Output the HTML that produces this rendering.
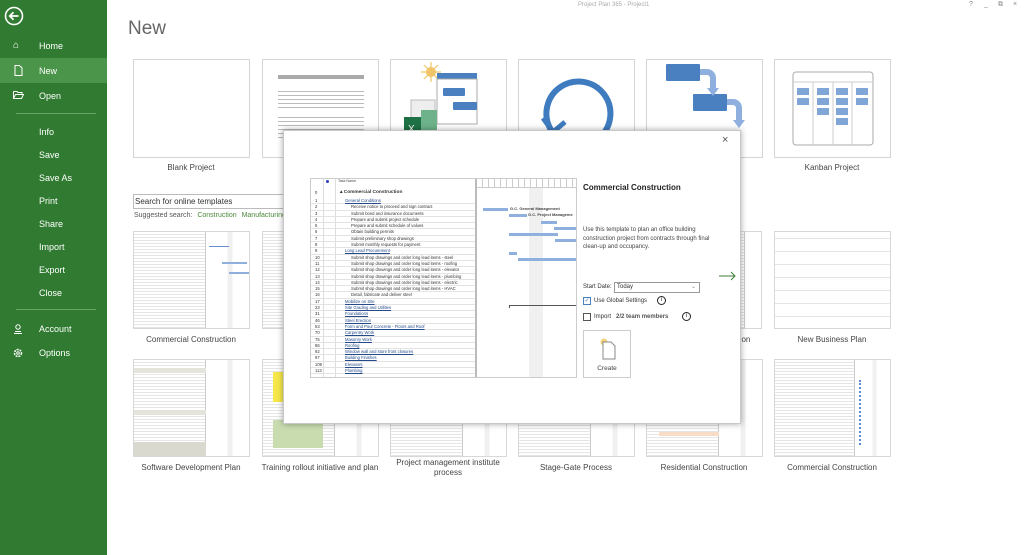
<!DOCTYPE html>
<html><head><meta charset="utf-8">
<style>
*{margin:0;padding:0;box-sizing:border-box}
body{width:1024px;height:555px;overflow:hidden;background:#fff;font-family:"Liberation Sans",sans-serif;position:relative;color:#444}
.side{position:absolute;left:0;top:0;width:107px;height:555px;background:#307b31}
.side .it{position:absolute;left:39px;color:#fff;font-size:9px}
.side .ic{position:absolute;left:13px;color:#fff;font-size:10px}
.sel{position:absolute;left:0;top:58px;width:107px;height:25px;background:#4b954a}
.hr{position:absolute;left:16px;width:80px;height:1px;background:#6aa368}
.abs{position:absolute}
.tile{position:absolute;top:59px;width:117px;height:99px;border:1px solid #d5d5d5;background:#fff}
.lab{position:absolute;font-size:8px;color:#444;text-align:center;width:140px}
.th{position:absolute;width:117px;height:98px;border:1px solid #d8d8d8;background:#fff;overflow:hidden}
.th .l{position:absolute;left:0;top:0;width:72px;height:100%;background:repeating-linear-gradient(#fff 0 2px,#e6e6e6 2px 3px);border-right:1px solid #ccc}
.th .r{position:absolute;left:72px;top:0;right:0;height:100%;background:linear-gradient(90deg,#fff 0 50%,#f0f0f0 50% 62%,#fff 62%)}
.dlg{position:absolute;left:283px;top:130px;width:458px;height:294px;background:#fff;border:1px solid #c8c8c8;box-shadow:0 0 6px rgba(0,0,0,.35)}
.row{position:absolute;left:0;width:266px;height:6.3px;font-size:4.2px;color:#333;white-space:nowrap;border-bottom:1px solid #e3e3e3}
.row .n{position:absolute;left:4px;width:20px}
.row .x{position:absolute;left:40px}
.u{color:#244a8a;text-decoration:underline}
.bar{position:absolute;height:3px;background:#8fb0df}
</style></head><body>
<div class="side">
<svg class="abs" style="left:4px;top:6px" width="20" height="20" viewBox="0 0 20 20"><circle cx="10" cy="10" r="8.5" fill="none" stroke="#fff" stroke-width="1.6"/><path d="M14.5 10H6M9.5 6.3L5.8 10l3.7 3.7" fill="none" stroke="#fff" stroke-width="1.8"/></svg>
<div class="sel"></div>
<div class="ic" style="top:40px">⌂</div><div class="it" style="top:41px">Home</div>
<svg class="abs" style="left:14px;top:65px" width="9" height="11"><path d="M1 .5h4.5l2.5 2.5v7.5H1z" fill="none" stroke="#fff"/></svg><div class="it" style="top:66px">New</div>
<svg class="abs" style="left:13px;top:90px" width="11" height="10"><path d="M.5 1.5h3.5l1 1h4v2M.5 1.5v7h8l2-4h-8l-2 4" fill="none" stroke="#fff"/></svg><div class="it" style="top:91px">Open</div>
<div class="hr" style="top:113px"></div>
<div class="it" style="top:127px">Info</div>
<div class="it" style="top:150px">Save</div>
<div class="it" style="top:173px">Save As</div>
<div class="it" style="top:196px">Print</div>
<div class="it" style="top:219px">Share</div>
<div class="it" style="top:242px">Import</div>
<div class="it" style="top:265px">Export</div>
<div class="it" style="top:288px">Close</div>
<div class="hr" style="top:309px"></div>
<svg class="abs" style="left:13px;top:324px" width="10" height="10"><circle cx="5" cy="3" r="2.2" fill="none" stroke="#fff"/><path d="M1 9.5h8M2 7.5h6" stroke="#fff"/></svg><div class="it" style="top:324px">Account</div>
<svg class="abs" style="left:13px;top:348px" width="10" height="10"><circle cx="5" cy="5" r="3.5" fill="none" stroke="#fff" stroke-width="1.5" stroke-dasharray="2 1"/><circle cx="5" cy="5" r="1.3" fill="none" stroke="#fff"/></svg><div class="it" style="top:348px">Options</div>
</div>

<div class="abs" style="left:578px;top:2px;font-size:6px;color:#aaa;white-space:nowrap">Project Plan 365 - Project1</div>
<div class="abs" style="left:968px;top:1px;font-size:7px;color:#888;white-space:nowrap;width:56px"><span style="position:absolute;left:1px">?</span><span style="position:absolute;left:16px">_</span><span style="position:absolute;left:30px">⧉</span><span style="position:absolute;left:45px">×</span></div>

<div class="abs" style="left:128px;top:18px;font-size:19px;color:#666">New</div>

<div class="tile" style="left:133px"></div>
<div class="tile" style="left:262px"><div class="abs" style="left:15px;top:15px;width:86px;height:4px;background:#aaa"></div>
<div class="abs" style="left:15px;top:28px;width:86px;height:22px;background:repeating-linear-gradient(#fff 0 3px,#bbb 3px 4px)"></div>
<div class="abs" style="left:15px;top:54px;width:86px;height:26px;background:repeating-linear-gradient(#fff 0 3px,#bbb 3px 4px)"></div></div>
<div class="tile" style="left:390px"><svg width="117" height="99"><circle cx="40" cy="12" r="5" fill="#f2c46a"/><path d="M40 2v20M30 12h20M33 5l14 14M47 5l-14 14" stroke="#f2c46a" stroke-width="1.2"/><rect x="46" y="13" width="40" height="6" fill="#4a7fc0"/><rect x="46" y="19" width="40" height="45" fill="none" stroke="#aaa"/><rect x="52" y="28" width="22" height="8" rx="1" fill="#4a7fc0"/><rect x="62" y="42" width="24" height="8" rx="1" fill="#4a7fc0"/><rect x="20" y="40" width="24" height="45" fill="#eee" stroke="#bbb"/><rect x="30" y="50" width="16" height="30" fill="#6db28a"/><rect x="13" y="57" width="17" height="20" fill="#1e7145"/><text x="17" y="72" font-size="10" fill="#fff" font-family="Liberation Sans">X</text><path d="M76 80l10-10 10 10v19H76z" fill="#6fa58a"/></svg></div>
<div class="tile" style="left:518px"><svg width="117" height="99"><path d="M32 70A32 32 0 1 1 80 78" fill="none" stroke="#3f7bbf" stroke-width="6"/><path d="M24 58l10 14 12-10" fill="none" stroke="#3f7bbf" stroke-width="5"/></svg></div>
<div class="tile" style="left:646px"><svg width="117" height="99"><rect x="19" y="4" width="34" height="17" rx="1" fill="#4a7fc0"/><rect x="46" y="34" width="34" height="17" rx="1" fill="#4a7fc0"/><path d="M53 12h7a6 6 0 0 1 6 6v12" fill="none" stroke="#8fb0df" stroke-width="6"/><path d="M60 28h12l-6 8z" fill="#8fb0df"/><path d="M80 42h6a6 6 0 0 1 6 6v14" fill="none" stroke="#8fb0df" stroke-width="6"/><path d="M86 60h12l-6 8z" fill="#8fb0df"/></svg></div>
<div class="tile" style="left:774px"><svg width="117" height="99"><rect x="18" y="12" width="80" height="73" rx="3" fill="#fff" stroke="#aaa"/><path d="M18 22h80M38 22v63M58 22v63M77 22v63" stroke="#ccc"/><g fill="#7fa6d6"><rect x="22" y="28" width="12" height="7"/><rect x="22" y="38" width="12" height="7"/><rect x="42" y="28" width="12" height="7"/><rect x="42" y="38" width="12" height="7"/><rect x="42" y="48" width="12" height="7"/><rect x="61" y="28" width="12" height="7"/><rect x="61" y="38" width="12" height="7"/><rect x="61" y="48" width="12" height="7"/><rect x="61" y="58" width="12" height="7"/><rect x="81" y="28" width="12" height="7"/><rect x="81" y="38" width="12" height="7"/></g></svg></div>
<div class="lab" style="left:121px;top:163px">Blank Project</div>
<div class="lab" style="left:762px;top:163px">Kanban Project</div>

<div class="abs" style="left:133px;top:194px;width:160px;height:15px;border:1px solid #bbb;font-size:8px;padding:2px 1px;color:#333">Search for online templates</div>
<div class="abs" style="left:134px;top:212px;font-size:7px;color:#555">Suggested search: <span style="color:#4b8a3a;margin-left:3px">Construction</span> <span style="color:#4b8a3a;margin-left:3px">Manufacturing</span></div>

<div class="th" style="left:133px;top:231px"><div class="l"></div><div class="r"></div><div class="bar" style="left:75px;top:14px;width:20px;height:1px;background:#6a8fcf"></div><div class="bar" style="left:88px;top:30px;width:25px;height:2px"></div><div class="bar" style="left:95px;top:40px;width:22px;height:2px"></div></div>
<div class="th" style="left:262px;top:231px"><div class="l"></div><div class="r"></div></div>
<div class="th" style="left:774px;top:231px;background:repeating-linear-gradient(90deg,#fff 0 5px,#eee 5px 7px,#fff 7px 28px,#fff 28px 36px)"><div class="abs" style="left:0;top:0;width:100%;height:100%;background:repeating-linear-gradient(#fff 0 6px,#e4e4e4 6px 7px,#fff 7px 13px)"></div></div>
<div class="lab" style="left:121px;top:335px">Commercial Construction</div>
<div class="lab" style="left:762px;top:335px">New Business Plan</div>
<div class="lab" style="left:733px;top:335px;width:30px;text-align:left">ation</div>
<div class="th" style="left:704px;top:231px;width:58px"><div class="l" style="width:40px"></div></div>

<div class="th" style="left:133px;top:359px"><div class="l"></div><div class="r"></div><div class="abs" style="left:0;top:8px;width:72px;height:5px;background:#e4e4dc"></div><div class="abs" style="left:0;top:50px;width:72px;height:5px;background:#e4e4dc"></div><div class="abs" style="left:0;top:82px;width:72px;height:14px;background:#d9d9cf"></div></div>
<div class="th" style="left:262px;top:359px"><div class="l"></div><div class="r"></div><div class="abs" style="left:10px;top:12px;width:12px;height:30px;background:#f6e84a"></div><div class="abs" style="left:10px;top:60px;width:50px;height:28px;background:#c9dcb0"></div></div>
<div class="th" style="left:390px;top:359px"><div class="l"></div><div class="r"></div></div>
<div class="th" style="left:518px;top:359px"><div class="l"></div><div class="r"></div></div>
<div class="th" style="left:646px;top:359px"><div class="l"></div><div class="r"></div><div class="abs" style="left:12px;top:72px;width:60px;height:4px;background:#f7dcc8"></div></div>
<div class="th" style="left:774px;top:359px"><div class="l" style="width:80px"></div><div class="r" style="left:80px"></div><div class="abs" style="left:84px;top:20px;width:10px;height:65px;border-left:2px dotted #5b8ad0"></div></div>
<div class="lab" style="left:121px;top:463px">Software Development Plan</div>
<div class="lab" style="left:250px;top:463px">Training rollout initiative and plan</div>
<div class="lab" style="left:393px;top:458px;width:110px;line-height:10px">Project management institute process</div>
<div class="lab" style="left:506px;top:463px">Stage-Gate Process</div>
<div class="lab" style="left:634px;top:463px">Residential Construction</div>
<div class="lab" style="left:762px;top:463px">Commercial Construction</div>

<div class="dlg">
<div class="abs" style="left:438px;top:3px;font-size:11px;color:#555">×</div>
<div class="abs" style="left:26px;top:47px;width:267px;height:200px;border:1px solid #ccc;overflow:hidden;background:#fff">
 <div class="abs" style="left:0;top:0;width:13px;height:100%;border-right:1px solid #ddd"></div>
 <div class="abs" style="left:24px;top:0;width:1px;height:100%;background:#ddd"></div>
 <div class="abs" style="left:164px;top:0;width:2px;height:100%;background:#bbb"></div>
 <div class="abs" style="left:166px;top:0;right:0;height:100%;background:linear-gradient(90deg,#fff 0 52px,#f0f0f0 52px 66px,#fff 66px)"></div>
 <div class="abs" style="left:15px;top:1px;width:3px;height:3px;border-radius:50%;background:#3040c8"></div>
 <div class="abs" style="left:27px;top:0;font-size:3.6px">Task Name</div>
 <div class="abs" style="left:166px;top:0;right:0;height:9px;border-bottom:1px solid #ccc;background:repeating-linear-gradient(90deg,#fff 0 5px,#ccc 5px 6px)"></div>
 <div class="abs" style="left:0;top:9px;width:164px;font-size:4.2px;color:#333">
  <div style="position:relative;height:10px"><span class="abs" style="left:4px;top:2px">0</span><b class="abs" style="left:29px;top:2px;font-size:4.8px">▴ Commercial Construction</b></div>
  <div style="line-height:6.3px;position:relative">
  <div class="row" style="position:relative;width:164px"><span class="n">1</span><span class="x u" style="left:34px">General Conditions</span></div>
  <div class="row" style="position:relative;width:164px"><span class="n">2</span><span class="x">Receive notice to proceed and sign contract</span></div>
  <div class="row" style="position:relative;width:164px"><span class="n">3</span><span class="x">Submit bond and insurance documents</span></div>
  <div class="row" style="position:relative;width:164px"><span class="n">4</span><span class="x">Prepare and submit project schedule</span></div>
  <div class="row" style="position:relative;width:164px"><span class="n">5</span><span class="x">Prepare and submit schedule of values</span></div>
  <div class="row" style="position:relative;width:164px"><span class="n">6</span><span class="x">Obtain building permits</span></div>
  <div class="row" style="position:relative;width:164px"><span class="n">7</span><span class="x">Submit preliminary shop drawings</span></div>
  <div class="row" style="position:relative;width:164px"><span class="n">8</span><span class="x">Submit monthly requests for payment</span></div>
  <div class="row" style="position:relative;width:164px"><span class="n">9</span><span class="x u" style="left:34px">Long Lead Procurement</span></div>
  <div class="row" style="position:relative;width:164px"><span class="n">10</span><span class="x">Submit shop drawings and order long lead items - steel</span></div>
  <div class="row" style="position:relative;width:164px"><span class="n">11</span><span class="x">Submit shop drawings and order long lead items - roofing</span></div>
  <div class="row" style="position:relative;width:164px"><span class="n">12</span><span class="x">Submit shop drawings and order long lead items - elevator</span></div>
  <div class="row" style="position:relative;width:164px"><span class="n">13</span><span class="x">Submit shop drawings and order long lead items - plumbing</span></div>
  <div class="row" style="position:relative;width:164px"><span class="n">14</span><span class="x">Submit shop drawings and order long lead items - electric</span></div>
  <div class="row" style="position:relative;width:164px"><span class="n">15</span><span class="x">Submit shop drawings and order long lead items - HVAC</span></div>
  <div class="row" style="position:relative;width:164px"><span class="n">16</span><span class="x">Detail, fabricate and deliver steel</span></div>
  <div class="row" style="position:relative;width:164px"><span class="n">17</span><span class="x u" style="left:34px">Mobilize on Site</span></div>
  <div class="row" style="position:relative;width:164px"><span class="n">23</span><span class="x u" style="left:34px">Site Grading and Utilities</span></div>
  <div class="row" style="position:relative;width:164px"><span class="n">31</span><span class="x u" style="left:34px">Foundations</span></div>
  <div class="row" style="position:relative;width:164px"><span class="n">46</span><span class="x u" style="left:34px">Steel Erection</span></div>
  <div class="row" style="position:relative;width:164px"><span class="n">53</span><span class="x u" style="left:34px">Form and Pour Concrete - Floors and Roof</span></div>
  <div class="row" style="position:relative;width:164px"><span class="n">70</span><span class="x u" style="left:34px">Carpentry Work</span></div>
  <div class="row" style="position:relative;width:164px"><span class="n">75</span><span class="x u" style="left:34px">Masonry Work</span></div>
  <div class="row" style="position:relative;width:164px"><span class="n">86</span><span class="x u" style="left:34px">Roofing</span></div>
  <div class="row" style="position:relative;width:164px"><span class="n">92</span><span class="x u" style="left:34px">Window wall and store front closures</span></div>
  <div class="row" style="position:relative;width:164px"><span class="n">97</span><span class="x u" style="left:34px">Building Finishes</span></div>
  <div class="row" style="position:relative;width:164px"><span class="n">109</span><span class="x u" style="left:34px">Elevators</span></div>
  <div class="row" style="position:relative;width:164px"><span class="n">113</span><span class="x u" style="left:34px">Plumbing</span></div>
  </div>
 </div>
 <div class="bar" style="left:172px;top:29px;width:25px"></div>
 <div class="abs" style="left:199px;top:27px;font-size:4px;font-weight:bold">G.C. General Management</div>
 <div class="bar" style="left:198px;top:35px;width:18px"></div>
 <div class="abs" style="left:217px;top:33px;font-size:4px;font-weight:bold">G.C. Project Manageme</div>
 <div class="bar" style="left:230px;top:42px;width:16px"></div>
 <div class="bar" style="left:243px;top:48px;width:24px"></div>
 <div class="bar" style="left:198px;top:54px;width:49px"></div>
 <div class="bar" style="left:244px;top:60px;width:24px"></div>
 <div class="bar" style="left:198px;top:73px;width:8px"></div>
 <div class="bar" style="left:207px;top:79px;width:60px"></div>
 <div class="abs" style="left:198px;top:126px;width:70px;height:3px;border-top:1px solid #555;border-left:1px solid #555"></div>
</div>
<div class="abs" style="left:299px;top:52px;font-size:8px;font-weight:bold;color:#222">Commercial Construction</div>
<div class="abs" style="left:299px;top:95px;width:140px;font-size:6px;line-height:8.5px;color:#444">Use this template to plan an office building construction project from contracts through final clean-up and occupancy.</div>
<div class="abs" style="left:299px;top:153px;font-size:6px;color:#333">Start Date:</div>
<div class="abs" style="left:330px;top:151px;width:86px;height:11px;border:1px solid #999;font-size:6px;padding:1px 2px;color:#333">Today<span style="position:absolute;right:3px;top:0;color:#888">⌄</span></div>
<div class="abs" style="left:299px;top:166px;width:8px;height:8px;border:1px solid #4a7fc0;font-size:6px;line-height:6px;color:#4a7fc0;text-align:center">✓</div>
<div class="abs" style="left:310px;top:167px;font-size:6px;color:#333">Use Global Settings</div>
<div class="abs" style="left:373px;top:165px;width:9px;height:9px;border:1px solid #222;border-radius:50%;font-size:6px;line-height:7px;text-align:center;color:#222">i</div>
<div class="abs" style="left:299px;top:182px;width:8px;height:8px;border:1px solid #555"></div>
<div class="abs" style="left:310px;top:183px;font-size:6px;color:#333">Import &nbsp;&nbsp;<b style="color:#555">2/2 team members</b></div>
<div class="abs" style="left:398px;top:181px;width:9px;height:9px;border:1px solid #222;border-radius:50%;font-size:6px;line-height:7px;text-align:center;color:#222">i</div>
<div class="abs" style="left:299px;top:199px;width:48px;height:48px;border:1px solid #ccc">
 <svg class="abs" style="left:16px;top:7px" width="18" height="22"><circle cx="4" cy="4" r="3.5" fill="#f3d27a"/><path d="M3 4h8l4 4v13H3z" fill="#fff" stroke="#888"/></svg>
 <div class="abs" style="left:0;top:34px;width:46px;text-align:center;font-size:6.5px;color:#444">Create</div>
</div>
</div>
<svg class="abs" style="left:719px;top:271px" width="18" height="10"><path d="M0 5h16M12 1l4 4-4 4" fill="none" stroke="#3f7f3a" stroke-width="1"/></svg>
</body></html>
